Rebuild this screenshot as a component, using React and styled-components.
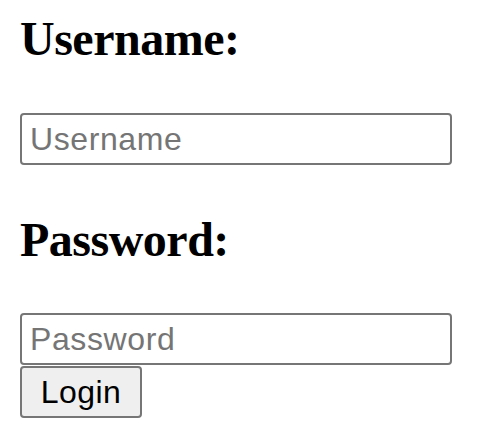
import React from "react"
import styled, { createGlobalStyle } from "styled-components"

const GlobalStyle = createGlobalStyle`
  html, body {
    margin: 0;
    padding: 0;
    background: #ffffff;
  }
`

const LoginForm = () => {
  return (
    <>
      <GlobalStyle />
      <Wrapper>
        <Label>Username:</Label>
        <Field type="text" placeholder="Username" />
        <Label>Password:</Label>
        <Field type="password" placeholder="Password" />
        <Button type="button">Login</Button>
      </Wrapper>
    </>
  )
}

export default LoginForm

const Wrapper = styled.form`
  display: flex;
  flex-direction: column;
  align-items: flex-start;
  padding: 11px 20px 0;
`

const Label = styled.h2`
  margin: 47px 0 45px;
  font-family: "Liberation Serif", "Times New Roman", serif;
  font-size: 48px;
  font-weight: 700;
  line-height: 56px;
  letter-spacing: -0.5px;
  color: #000000;

  &:first-child {
    margin-top: 0;
    margin-bottom: 46px;
  }
`

const Field = styled.input`
  box-sizing: border-box;
  width: 432px;
  height: 52px;
  margin: 0;
  padding: 0 8px;
  border: 2px solid #767676;
  border-radius: 4px;
  background: #ffffff;
  font-family: "Liberation Sans", Arial, sans-serif;
  font-size: 32px;
  letter-spacing: 0.6px;
  color: #000000;
  outline: none;

  &::placeholder {
    color: #757575;
  }
`

const Button = styled.button`
  box-sizing: border-box;
  width: 122px;
  height: 52px;
  margin: 1px 0 0;
  padding: 0;
  border: 2px solid #767676;
  border-radius: 4px;
  background: #efefef;
  font-family: "Liberation Sans", Arial, sans-serif;
  font-size: 32px;
  letter-spacing: 0.4px;
  color: #000000;
  cursor: pointer;
`
